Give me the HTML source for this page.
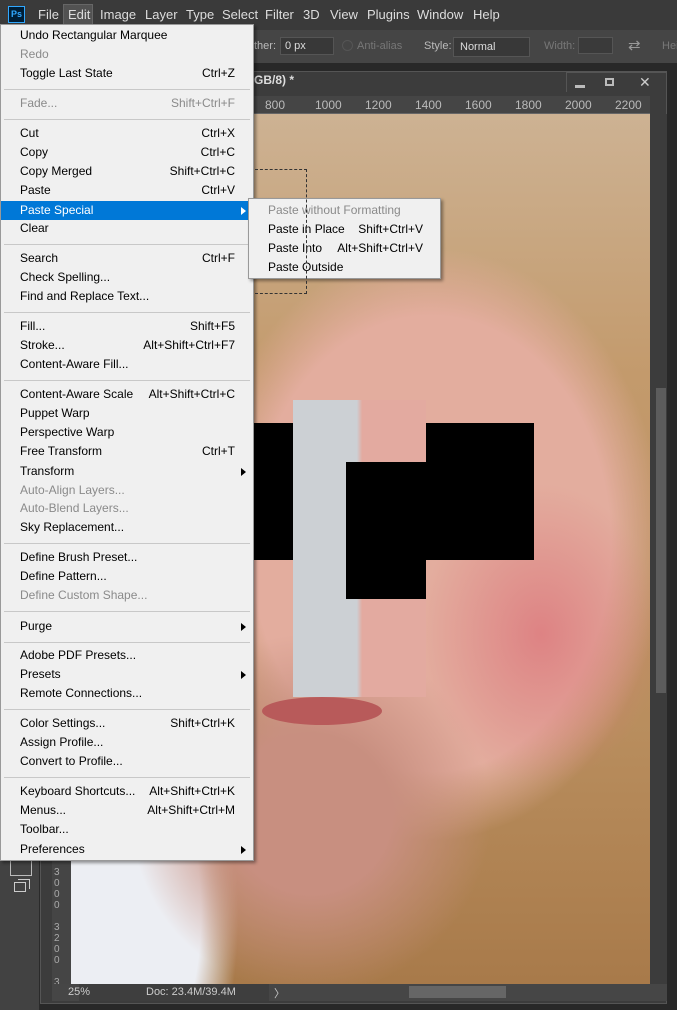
<!DOCTYPE html><html><head><meta charset="utf-8"><style>
*{margin:0;padding:0;box-sizing:border-box}
body{width:677px;height:1010px;background:#282828;position:relative;overflow:hidden;font-family:"Liberation Sans",sans-serif;font-size:12px}
.a{position:absolute}
.mb{left:0;top:0;width:677px;height:30px;background:#3a3a3a;color:#ddd;font-size:13px}
.mb span{position:absolute;top:7px}
.ob{left:0;top:30px;width:677px;height:33px;background:#454545;color:#bbb}
.tb{left:0;top:63px;width:40px;height:947px;background:#424242;border-right:1px solid #2a2a2a}
.menu{left:0;top:24px;width:254px;height:837px;background:#f0f0f0;border:1px solid #999;box-shadow:2px 2px 3px rgba(0,0,0,.4);color:#000}
.i{position:absolute;left:0;width:252px;height:19px;line-height:19px;padding-left:19px}
.i b{font-weight:normal;position:absolute;right:18px}
.d{color:#8a8a8a}
.s{position:absolute;left:3px;width:246px;height:1px;background:#c8c8c8}
.ar{position:absolute;right:7px;top:6px;width:0;height:0;border-left:5px solid #000;border-top:4px solid transparent;border-bottom:4px solid transparent}
.hl{background:#0078d7;color:#fff}
</style></head><body>
<div class="a mb">
<div class="a" style="left:8px;top:6px;width:17px;height:17px;background:#001e36;border:1px solid #31a8ff;color:#31a8ff;font-size:9px;font-weight:bold;line-height:15px;text-align:center">Ps</div>
<span style="left:38px">File</span>
<div class="a" style="left:63px;top:4px;width:30px;height:21px;background:#525252;border:1px solid #666"></div>
<span style="left:68px">Edit</span><span style="left:100px">Image</span><span style="left:145px">Layer</span><span style="left:186px">Type</span><span style="left:222px">Select</span><span style="left:265px">Filter</span><span style="left:303px">3D</span><span style="left:330px">View</span><span style="left:367px">Plugins</span><span style="left:417px">Window</span><span style="left:473px">Help</span>
</div>
<div class="a ob">
<span class="a" style="left:254px;top:10px;font-size:11px">ther:</span>
<div class="a" style="left:280px;top:7px;width:54px;height:18px;background:#383838;border:1px solid #555;color:#ddd;font-size:11px;padding:2px 4px">0 px</div>
<div class="a" style="left:342px;top:10px;width:11px;height:11px;border:1px solid #555;border-radius:50%"></div>
<span class="a" style="left:357px;top:10px;font-size:11px;color:#777">Anti-alias</span>
<span class="a" style="left:424px;top:10px;font-size:11px">Style:</span>
<div class="a" style="left:453px;top:7px;width:77px;height:20px;background:#383838;border:1px solid #555;color:#ddd;font-size:11px;padding:3px 6px">Normal</div>
<span class="a" style="left:544px;top:10px;font-size:11px;color:#777">Width:</span>
<div class="a" style="left:578px;top:7px;width:35px;height:17px;background:#3a3a3a;border:1px solid #555"></div>
<span class="a" style="left:628px;top:6px;font-size:15px;color:#999">⇄</span>
<span class="a" style="left:662px;top:10px;font-size:11px;color:#777">Hei</span>
</div>
<div class="a tb"></div>
<div class="a" style="left:10px;top:860px;width:22px;height:16px;border:1px solid #bbb"></div>
<div class="a" style="left:14px;top:882px;width:12px;height:10px;border:1px solid #ccc"></div>
<div class="a" style="left:18px;top:879px;width:12px;height:10px;border:1px solid #ccc;border-left:none;border-bottom:none"></div>
<!-- doc window -->
<div class="a" style="left:40px;top:71px;width:627px;height:933px;background:#3c3c3c;border:1px solid #555"></div>
<div class="a" style="left:254px;top:73px;font-size:12px;color:#ddd;font-weight:bold">GB/8) *</div>
<div class="a" style="left:566px;top:72px;width:101px;height:20px;border:1px solid #555;border-bottom:none;color:#ccc"><span class="a" style="left:8px;top:4px;width:10px;height:3px;background:#bbb;top:12px"></span><span class="a" style="left:38px;top:5px;width:9px;height:8px;border:2px solid #bbb"></span><span class="a" style="left:72px;top:1px;font-size:14px">✕</span></div>
<div class="a" style="left:254px;top:96px;width:396px;height:18px;background:#454545;color:#bbb;font-size:12px;border-bottom:1px solid #666">
<span class="a" style="left:11px;top:2px">800</span><span class="a" style="left:61px;top:2px">1000</span><span class="a" style="left:111px;top:2px">1200</span><span class="a" style="left:161px;top:2px">1400</span><span class="a" style="left:211px;top:2px">1600</span><span class="a" style="left:261px;top:2px">1800</span><span class="a" style="left:311px;top:2px">2000</span><span class="a" style="left:361px;top:2px">2200</span></div>
<div class="a" style="left:52px;top:114px;width:19px;height:870px;background:#454545;color:#aaa;font-size:10px;line-height:11px;padding:6px 0 0 2px">
<div style="position:absolute;top:753px;left:2px">3<br>0<br>0<br>0<br><br>3<br>2<br>0<br>0<br><br>3<br>4</div></div>
<div class="a" style="left:71px;top:114px;width:579px;height:870px;background:
radial-gradient(ellipse 120px 150px at 470px 520px,rgba(220,120,125,.8),rgba(220,150,140,0) 100%),
radial-gradient(ellipse 200px 200px at 240px 700px,#c88f80 40%,rgba(200,143,128,0) 90%),
radial-gradient(ellipse 300px 380px at 360px 430px,#e3ad9e 60%,rgba(227,173,158,0) 78%),
radial-gradient(ellipse 150px 300px at 40px 800px,#eceef3 60%,rgba(236,238,243,0) 85%),
linear-gradient(180deg,#cdb293 0%,#c39a6c 30%,#b98e5e 70%,#a87a4a)"></div>
<div class="a" style="left:650px;top:114px;width:17px;height:870px;background:#3c3c3c"></div>
<div class="a" style="left:656px;top:388px;width:10px;height:305px;background:#5c5c5c"></div>
<div class="a" style="left:293px;top:400px;width:133px;height:297px;background:linear-gradient(90deg,#ccd0d4 48%,#e3aaa0 52%)"></div>
<div class="a" style="left:254px;top:423px;width:39px;height:137px;background:#000"></div>
<div class="a" style="left:426px;top:423px;width:108px;height:137px;background:#000"></div>
<div class="a" style="left:346px;top:462px;width:80px;height:137px;background:#000"></div>
<div class="a" style="left:262px;top:697px;width:120px;height:28px;border-radius:50%;background:#b85a5a"></div>
<div class="a" style="left:52px;top:984px;width:615px;height:17px;background:#464646;color:#ccc;font-size:11px">
<div class="a" style="left:27px;top:0;width:190px;height:17px;background:#3e3e3e"></div>
<span class="a" style="left:16px;top:2px">25%</span>
<span class="a" style="left:94px;top:2px">Doc: 23.4M/39.4M</span>
<span class="a" style="left:222px;top:1px">〉</span>
<div class="a" style="left:357px;top:2px;width:97px;height:12px;background:#666"></div>
</div>
<!-- Edit menu -->
<div class="a menu">
<div class="i" style="top:1px">Undo Rectangular Marquee</div>
<div class="i d" style="top:20px">Redo</div>
<div class="i" style="top:39px">Toggle Last State<b>Ctrl+Z</b></div>
<div class="s" style="top:64px"></div>
<div class="i d" style="top:69px">Fade...<b>Shift+Ctrl+F</b></div>
<div class="s" style="top:94px"></div>
<div class="i" style="top:99px">Cut<b>Ctrl+X</b></div>
<div class="i" style="top:118px">Copy<b>Ctrl+C</b></div>
<div class="i" style="top:137px">Copy Merged<b>Shift+Ctrl+C</b></div>
<div class="i" style="top:156px">Paste<b>Ctrl+V</b></div>
<div class="i hl" style="top:176px">Paste Special<span class="ar" style="border-left-color:#fff"></span></div>
<div class="i" style="top:194px">Clear</div>
<div class="s" style="top:219px"></div>
<div class="i" style="top:224px">Search<b>Ctrl+F</b></div>
<div class="i" style="top:243px">Check Spelling...</div>
<div class="i" style="top:262px">Find and Replace Text...</div>
<div class="s" style="top:287px"></div>
<div class="i" style="top:292px">Fill...<b>Shift+F5</b></div>
<div class="i" style="top:311px">Stroke...<b>Alt+Shift+Ctrl+F7</b></div>
<div class="i" style="top:330px">Content-Aware Fill...</div>
<div class="s" style="top:355px"></div>
<div class="i" style="top:360px">Content-Aware Scale<b>Alt+Shift+Ctrl+C</b></div>
<div class="i" style="top:379px">Puppet Warp</div>
<div class="i" style="top:398px">Perspective Warp</div>
<div class="i" style="top:417px">Free Transform<b>Ctrl+T</b></div>
<div class="i" style="top:437px">Transform<span class="ar"></span></div>
<div class="i d" style="top:456px">Auto-Align Layers...</div>
<div class="i d" style="top:474px">Auto-Blend Layers...</div>
<div class="i" style="top:493px">Sky Replacement...</div>
<div class="s" style="top:518px"></div>
<div class="i" style="top:523px">Define Brush Preset...</div>
<div class="i" style="top:542px">Define Pattern...</div>
<div class="i d" style="top:561px">Define Custom Shape...</div>
<div class="s" style="top:586px"></div>
<div class="i" style="top:592px">Purge<span class="ar"></span></div>
<div class="s" style="top:617px"></div>
<div class="i" style="top:621px">Adobe PDF Presets...</div>
<div class="i" style="top:640px">Presets<span class="ar"></span></div>
<div class="i" style="top:659px">Remote Connections...</div>
<div class="s" style="top:684px"></div>
<div class="i" style="top:689px">Color Settings...<b>Shift+Ctrl+K</b></div>
<div class="i" style="top:708px">Assign Profile...</div>
<div class="i" style="top:727px">Convert to Profile...</div>
<div class="s" style="top:752px"></div>
<div class="i" style="top:757px">Keyboard Shortcuts...<b>Alt+Shift+Ctrl+K</b></div>
<div class="i" style="top:776px">Menus...<b>Alt+Shift+Ctrl+M</b></div>
<div class="i" style="top:795px">Toolbar...</div>
<div class="i" style="top:815px">Preferences<span class="ar"></span></div>
</div>
<!-- submenu -->
<div class="a" style="left:248px;top:198px;width:193px;height:81px;background:#f0f0f0;border:1px solid #999;box-shadow:2px 2px 3px rgba(0,0,0,.4)">
<div class="i d" style="top:2px;width:191px">Paste without Formatting</div>
<div class="i" style="top:21px;width:191px">Paste in Place<b style="right:17px">Shift+Ctrl+V</b></div>
<div class="i" style="top:40px;width:191px">Paste Into<b style="right:17px">Alt+Shift+Ctrl+V</b></div>
<div class="i" style="top:59px;width:191px">Paste Outside</div>
</div>
<div class="a" style="left:255px;top:169px;width:52px;height:125px;border:1px dashed #333;border-left:none"></div>
</body></html>
